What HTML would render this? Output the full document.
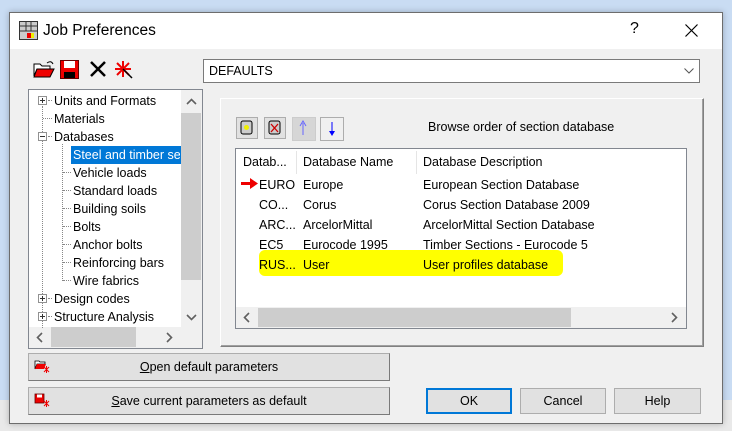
<!DOCTYPE html>
<html><head><meta charset="utf-8"><style>
*{margin:0;padding:0;box-sizing:border-box}
body{width:732px;height:431px;overflow:hidden;background:#c9dcf3;font-family:"Liberation Sans",sans-serif;font-size:12.5px;color:#000;position:relative}
.a{position:absolute}
.t{position:absolute;white-space:nowrap;line-height:14px}
.btn{position:absolute;background:#e1e1e1;border:1px solid #adadad;text-align:center;line-height:24px}
.dot{position:absolute;border-top:1px dotted #888;height:0}
.vdot{position:absolute;border-left:1px dotted #888;width:0}
.pm{position:absolute;width:9px;height:9px;border:1px solid #919191;background:#fff}
.pm:before{content:"";position:absolute;left:1px;top:3px;width:5px;height:1px;background:#333}
.pm.p:after{content:"";position:absolute;left:3px;top:1px;width:1px;height:5px;background:#333}
</style></head><body>
<div class="a" style="left:0;top:400px;width:732px;height:31px;background:#e9e9e9"></div>
<div class="a" style="left:9px;top:12px;width:714px;height:412px;background:#f0f0f0;border:1px solid #6d6d6d;box-shadow:0 0 6px rgba(0,0,0,.25)"></div>
<div class="a" style="left:10px;top:13px;width:712px;height:36px;background:#fff"></div>
<svg class="a" style="left:19px;top:21px" width="20" height="20"><rect x="0.5" y="0.5" width="18" height="18" fill="#ccc" stroke="#333"/><path d="M1 5h17M1 10h17M7 1v9M12 1v9" stroke="#333"/><rect x="8" y="12" width="4" height="5" fill="#e00"/><rect x="12" y="12" width="3" height="5" fill="#ee0"/></svg>
<div class="t" style="left:43px;top:23px;font-size:15.5px;line-height:16px">Job Preferences</div>
<div class="t" style="left:630px;top:22px;font-size:16px">?</div>
<svg class="a" style="left:685px;top:24px" width="13" height="13"><path d="M0.5 0.5L12.5 12.5M12.5 0.5L0.5 12.5" stroke="#000" stroke-width="1.2"/></svg>
<svg class="a" style="left:33px;top:60px" width="22" height="18"><path d="M1 4h6l2 2h8v3H4L1 16z" fill="#fff" stroke="#000"/><path d="M4 9h17l-4 8H1z" fill="#e00" stroke="#000"/><path d="M14 3q4-3 6 1" stroke="#000" fill="none"/></svg>
<svg class="a" style="left:60px;top:60px" width="20" height="19"><rect x="0.5" y="0.5" width="18" height="18" fill="#e00" stroke="#600"/><rect x="4" y="1" width="11" height="7" fill="#fff"/><rect x="4" y="12" width="11" height="6" fill="#000"/></svg>
<svg class="a" style="left:89px;top:61px" width="18" height="16"><path d="M2 1L16 15M16 1L2 15" stroke="#000" stroke-width="2.5"/></svg>
<svg class="a" style="left:113px;top:59px" width="22" height="20"><path d="M2 10h16M10 2v16M4 4l12 12M16 4L4 16" stroke="#e00" stroke-width="2"/><path d="M10 10l9 9" stroke="#000" stroke-width="1.5"/></svg>
<div class="a" style="left:203px;top:59px;width:497px;height:24px;background:#fff;border:1px solid #7a7a7a"></div>
<div class="t" style="left:209px;top:64px">DEFAULTS</div>
<svg class="a" style="left:684px;top:68px" width="10" height="6"><path d="M0.5 0.5L5 5L9.5 0.5" stroke="#555" fill="none"/></svg>
<div class="a" style="left:28px;top:89px;width:175px;height:260px;background:#fff;border:1px solid #828790"></div>
<div class="a" style="left:181px;top:90px;width:21px;height:237px;background:#f0f0f0"></div>
<div class="a" style="left:181px;top:113px;width:20px;height:167px;background:#cdcdcd"></div>
<svg class="a" style="left:186px;top:98px" width="11" height="7"><path d="M1 6L5.5 1.5L10 6" stroke="#606060" stroke-width="1.6" fill="none"/></svg>
<svg class="a" style="left:186px;top:314px" width="11" height="7"><path d="M1 1L5.5 5.5L10 1" stroke="#606060" stroke-width="1.6" fill="none"/></svg>
<div class="a" style="left:29px;top:327px;width:173px;height:21px;background:#f0f0f0"></div>
<div class="a" style="left:51px;top:327px;width:85px;height:20px;background:#cdcdcd"></div>
<svg class="a" style="left:36px;top:332px" width="7" height="11"><path d="M6 1L1.5 5.5L6 10" stroke="#606060" stroke-width="1.6" fill="none"/></svg>
<svg class="a" style="left:166px;top:332px" width="7" height="11"><path d="M1 1L5.5 5.5L1 10" stroke="#606060" stroke-width="1.6" fill="none"/></svg>
<div class="vdot" style="left:42px;top:106px;height:222px"></div>
<div class="vdot" style="left:62px;top:144px;height:137px"></div>
<div class="pm p" style="left:38px;top:96px"></div><div class="dot" style="left:48px;top:100px;width:4px"></div>
<div class="dot" style="left:43px;top:118px;width:9px"></div>
<div class="pm" style="left:38px;top:132px"></div><div class="dot" style="left:48px;top:136px;width:4px"></div>
<div class="pm p" style="left:38px;top:294px"></div><div class="dot" style="left:48px;top:298px;width:4px"></div>
<div class="pm p" style="left:38px;top:312px"></div><div class="dot" style="left:48px;top:316px;width:4px"></div>
<div class="t" style="left:54px;top:94px">Units and Formats</div>
<div class="t" style="left:54px;top:112px">Materials</div>
<div class="t" style="left:54px;top:130px">Databases</div>
<div class="a" style="left:71px;top:146px;width:110px;height:18px;background:#0078d7"></div>
<div class="t" style="left:73px;top:148px;color:#fff;width:107px;overflow:hidden">Steel and timber sections</div>
<div class="dot" style="left:63px;top:172px;width:8px"></div><div class="t" style="left:73px;top:166px">Vehicle loads</div>
<div class="dot" style="left:63px;top:190px;width:8px"></div><div class="t" style="left:73px;top:184px">Standard loads</div>
<div class="dot" style="left:63px;top:208px;width:8px"></div><div class="t" style="left:73px;top:202px">Building soils</div>
<div class="dot" style="left:63px;top:226px;width:8px"></div><div class="t" style="left:73px;top:220px">Bolts</div>
<div class="dot" style="left:63px;top:244px;width:8px"></div><div class="t" style="left:73px;top:238px">Anchor bolts</div>
<div class="dot" style="left:63px;top:262px;width:8px"></div><div class="t" style="left:73px;top:256px">Reinforcing bars</div>
<div class="dot" style="left:63px;top:280px;width:8px"></div><div class="t" style="left:73px;top:274px">Wire fabrics</div>
<div class="t" style="left:54px;top:292px">Design codes</div>
<div class="t" style="left:54px;top:310px">Structure Analysis</div>
<div class="a" style="left:220px;top:98px;width:484px;height:249px;border:1px solid;border-color:#fff #808080 #808080 #fff;box-shadow:inset -1px -1px 0 #a0a0a0"></div>
<div class="a" style="left:236px;top:117px;width:22px;height:22px;border:1px solid #adadad;background:#e1e1e1"></div>
<svg class="a" style="left:240px;top:120px" width="14" height="16"><rect x="1" y="1" width="11" height="13" rx="2" fill="#ccc" stroke="#000"/><circle cx="6.5" cy="7.5" r="2.5" fill="#ee0"/></svg>
<div class="a" style="left:264px;top:117px;width:22px;height:22px;border:1px solid #adadad;background:#e1e1e1"></div>
<svg class="a" style="left:268px;top:120px" width="14" height="16"><rect x="1" y="1" width="11" height="13" rx="2" fill="#ccc" stroke="#000"/><path d="M3 4l7 8M10 4l-7 8" stroke="#c00" stroke-width="1.3"/></svg>
<div class="a" style="left:292px;top:117px;width:24px;height:24px;border:1px solid #ccc;background:#d6d6d6"></div>
<svg class="a" style="left:299px;top:120px" width="8" height="16"><path d="M4 15V3M1 6L4 1L7 6" stroke="#66f" fill="none"/></svg>
<div class="a" style="left:320px;top:117px;width:24px;height:24px;border:1px solid #adadad;background:#f0f0f0"></div>
<svg class="a" style="left:328px;top:121px" width="8" height="16"><path d="M4 1v11" stroke="#00f"/><path d="M1 10L4 15L7 10z" fill="#00f"/></svg>
<div class="t" style="left:428px;top:120px">Browse order of section database</div>
<div class="a" style="left:235px;top:148px;width:452px;height:181px;background:#fff;border:1px solid #828790"></div>
<div class="a" style="left:296px;top:151px;width:1px;height:23px;background:#e5e5e5"></div>
<div class="a" style="left:416px;top:151px;width:1px;height:23px;background:#e5e5e5"></div>
<div class="t" style="left:243px;top:155px">Datab...</div>
<div class="t" style="left:303px;top:155px">Database Name</div>
<div class="t" style="left:423px;top:155px">Database Description</div>
<svg class="a" style="left:241px;top:178px" width="17" height="11"><path d="M0 4h9V0l8 5.5L9 11V7H0z" fill="#e00"/></svg>
<div class="t" style="left:259px;top:178px">EURO</div><div class="t" style="left:303px;top:178px">Europe</div><div class="t" style="left:423px;top:178px">European Section Database</div>
<div class="t" style="left:259px;top:198px">CO...</div><div class="t" style="left:303px;top:198px">Corus</div><div class="t" style="left:423px;top:198px">Corus Section Database 2009</div>
<div class="t" style="left:259px;top:218px">ARC...</div><div class="t" style="left:303px;top:218px">ArcelorMittal</div><div class="t" style="left:423px;top:218px">ArcelorMittal Section Database</div>
<div class="t" style="left:259px;top:238px">EC5</div><div class="t" style="left:303px;top:238px">Eurocode 1995</div><div class="t" style="left:423px;top:238px">Timber Sections - Eurocode 5</div>
<div class="a" style="left:259px;top:250px;width:304px;height:26px;background:#ffff00;border-radius:6px"></div>
<div class="t" style="left:259px;top:258px">RUS...</div><div class="t" style="left:303px;top:258px">User</div><div class="t" style="left:423px;top:258px">User profiles database</div>
<div class="a" style="left:236px;top:307px;width:450px;height:21px;background:#f0f0f0"></div>
<div class="a" style="left:258px;top:308px;width:313px;height:19px;background:#cdcdcd"></div>
<svg class="a" style="left:243px;top:312px" width="7" height="11"><path d="M6 1L1.5 5.5L6 10" stroke="#606060" stroke-width="1.6" fill="none"/></svg>
<svg class="a" style="left:671px;top:312px" width="7" height="11"><path d="M1 1L5.5 5.5L1 10" stroke="#606060" stroke-width="1.6" fill="none"/></svg>
<div class="btn" style="left:28px;top:353px;width:362px;height:28px;border-color:#adadad #7a7a7a #7a7a7a #adadad;line-height:26px"><u>O</u>pen default parameters</div>
<svg class="a" style="left:34px;top:359px" width="16" height="14"><path d="M1 2h4l1 1h5v2H3L1 10z" fill="#fff" stroke="#000" stroke-width=".8"/><path d="M3 5h9l-2 5H1z" fill="#e00"/><path d="M10 8l5 5M15 8l-5 5M12.5 7v7" stroke="#e00"/></svg>
<div class="btn" style="left:28px;top:387px;width:362px;height:28px;border-color:#adadad #7a7a7a #7a7a7a #adadad;line-height:26px"><u>S</u>ave current parameters as default</div>
<svg class="a" style="left:34px;top:393px" width="16" height="14"><rect x="1" y="1" width="9" height="9" fill="#e00" stroke="#600" stroke-width=".8"/><rect x="3" y="1.5" width="5" height="3" fill="#fff"/><path d="M10 8l5 5M15 8l-5 5M12.5 7v7" stroke="#e00"/></svg>
<div class="btn" style="left:426px;top:388px;width:86px;height:26px;border:2px solid #0078d7;line-height:22px">OK</div>
<div class="btn" style="left:520px;top:388px;width:86px;height:26px">Cancel</div>
<div class="btn" style="left:614px;top:388px;width:87px;height:26px">Help</div>
</body></html>
